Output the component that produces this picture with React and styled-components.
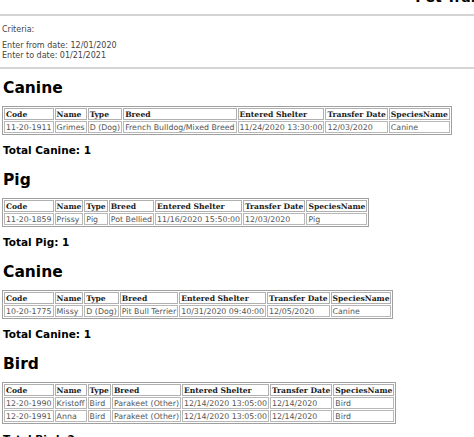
import React from 'react';
import styled, { createGlobalStyle } from 'styled-components';

const GlobalStyle = createGlobalStyle`
  html, body {
    margin: 0;
    padding: 0;
    background: #fff;
  }
  body {
    font-family: "DejaVu Sans", Verdana, sans-serif;
    color: #000;
    overflow: hidden;
  }
`;

const Page = styled.div`
  width: 474px;
  height: 437px;
  overflow: hidden;
`;

const TitleBar = styled.div`
  height: 14px;
  overflow: hidden;
  display: flex;
  justify-content: flex-end;
  align-items: flex-end;
`;

const Title = styled.div`
  font-size: 14px;
  font-weight: bold;
  line-height: 14px;
  margin-bottom: 10px;
  margin-right: -96px;
  white-space: nowrap;
`;

const Rule = styled.hr`
  margin: 0;
  border: 0;
  height: 2px;
  background: #d4d4d4;
`;

const Criteria = styled.div`
  padding: 9px 2px 6px;
  font-size: 8px;
  line-height: 10px;
  color: #444;
`;

const CriteriaLabel = styled.div`
  margin-bottom: 6px;
`;

const Content = styled.div`
  padding: 0 2px;
  margin-top: -5px;
`;

const SpeciesHeading = styled.h2`
  margin: 15px 0 9px 1px;
  font-size: 15.5px;
  line-height: 18px;
  font-weight: bold;
`;

const Table = styled.table`
  border-collapse: separate;
  border-spacing: 1px;
  border: 1px solid #a0a0a0;
  font-size: 7.85px;
  line-height: 9px;
`;

const Th = styled.th`
  border: 1px solid #b0b0b0;
  padding: 1px 1px 0;
  text-align: left;
  font-family: "DejaVu Serif", Georgia, serif;
  font-size: 7.6px;
  font-weight: bold;
  color: #1a1a1a;
  white-space: nowrap;
`;

const Td = styled.td`
  border: 1px solid #b8b8b8;
  padding: 1px 1px 0;
  color: #555;
  white-space: nowrap;
`;

const Total = styled.div`
  margin: 9px 0 0 1px;
  font-size: 10.5px;
  line-height: 12px;
  font-weight: bold;
`;

const columns = ['Code', 'Name', 'Type', 'Breed', 'Entered Shelter', 'Transfer Date', 'SpeciesName'];

const groups = [
  {
    species: 'Canine',
    rows: [['11-20-1911', 'Grimes', 'D (Dog)', 'French Bulldog/Mixed Breed', '11/24/2020 13:30:00', '12/03/2020', 'Canine']],
  },
  {
    species: 'Pig',
    rows: [['11-20-1859', 'Prissy', 'Pig', 'Pot Bellied', '11/16/2020 15:50:00', '12/03/2020', 'Pig']],
  },
  {
    species: 'Canine',
    rows: [['10-20-1775', 'Missy', 'D (Dog)', 'Pit Bull Terrier', '10/31/2020 09:40:00', '12/05/2020', 'Canine']],
  },
  {
    species: 'Bird',
    rows: [
      ['12-20-1990', 'Kristoff', 'Bird', 'Parakeet (Other)', '12/14/2020 13:05:00', '12/14/2020', 'Bird'],
      ['12-20-1991', 'Anna', 'Bird', 'Parakeet (Other)', '12/14/2020 13:05:00', '12/14/2020', 'Bird'],
    ],
  },
];

function SpeciesGroup({ species, rows }) {
  return (
    <section>
      <SpeciesHeading>{species}</SpeciesHeading>
      <Table>
        <thead>
          <tr>
            {columns.map(c => (
              <Th key={c}>{c}</Th>
            ))}
          </tr>
        </thead>
        <tbody>
          {rows.map(r => (
            <tr key={r[0]}>
              {r.map((v, i) => (
                <Td key={i}>{v}</Td>
              ))}
            </tr>
          ))}
        </tbody>
      </Table>
      <Total>
        Total {species}: {rows.length}
      </Total>
    </section>
  );
}

export default function App() {
  return (
    <Page>
      <GlobalStyle />
      <TitleBar>
        <Title>Pet Transfer Report</Title>
      </TitleBar>
      <Rule />
      <Criteria>
        <CriteriaLabel>Criteria:</CriteriaLabel>
        <div>Enter from date: 12/01/2020</div>
        <div>Enter to date: 01/21/2021</div>
      </Criteria>
      <Rule />
      <Content>
        {groups.map((g, i) => (
          <SpeciesGroup key={i} species={g.species} rows={g.rows} />
        ))}
      </Content>
    </Page>
  );
}
